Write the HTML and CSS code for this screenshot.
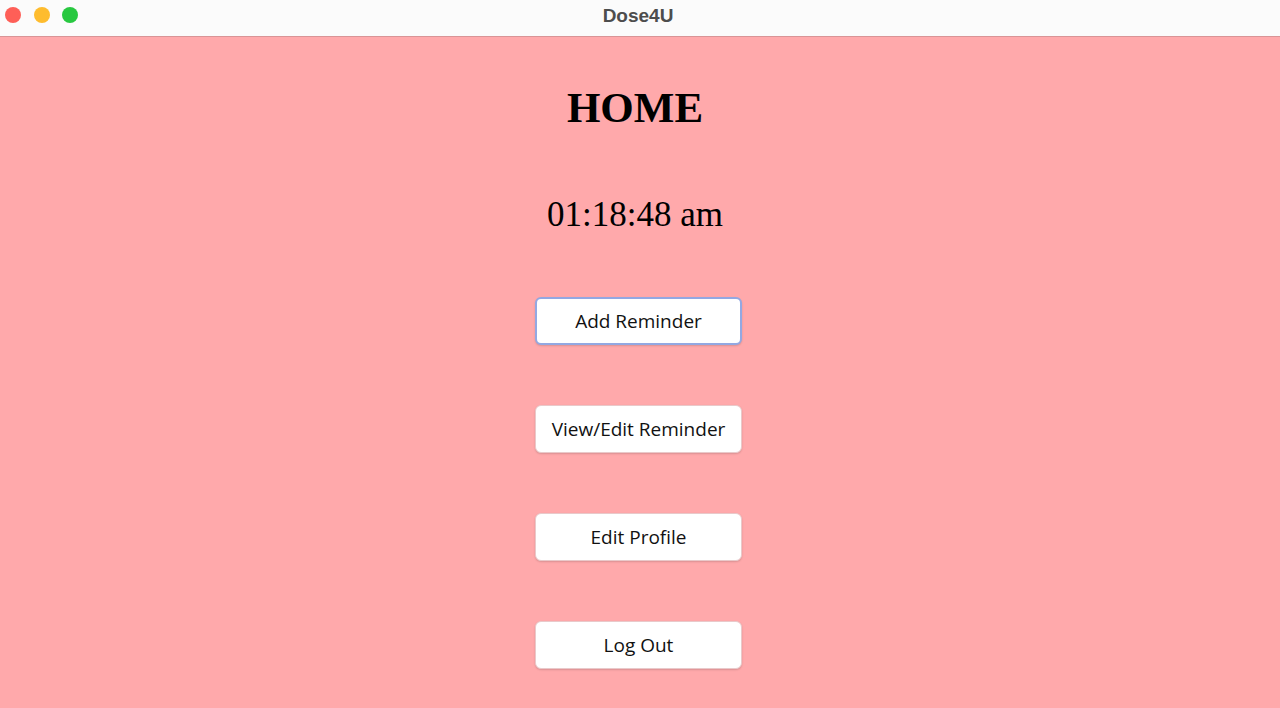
FILE: index.html
```html
<!DOCTYPE html>
<html lang="en">
<head>
    <meta charset="UTF-8">
    <meta name="viewport" content="width=device-width, initial-scale=1.0">
    <title>Dose4U</title>
    <link rel="stylesheet" href="styles.css">
</head>
<body>
    <div class="titlebar">
        <div class="lights">
            <span class="light red"></span>
            <span class="light yellow"></span>
            <span class="light green"></span>
        </div>
        <div class="app-name">Dose4U</div>
    </div>

    <div class="container">
        <h1>HOME</h1>
        <div class="clock" id="clock">01:18:48 am</div>

        <div class="menu">
            <button class="btn focused">Add Reminder</button>
            <button class="btn">View/Edit Reminder</button>
            <button class="btn">Edit Profile</button>
            <button class="btn">Log Out</button>
        </div>
    </div>
</body>
</html>
```

FILE: styles.css
```css
body {
    margin: 0;
    background: #ffa9ab;
    font-family: "Liberation Serif", serif;
    height: 708px;
    overflow: hidden;
}
.titlebar {
    position: relative;
    height: 36px;
    background: #fbfbfb;
    border-bottom: 1px solid #d99496;
    display: flex;
    align-items: center;
    justify-content: center;
}
.lights {
    position: absolute;
    left: 5px;
    top: 7px;
    display: flex;
    gap: 12.5px;
}
.light {
    width: 16px;
    height: 16px;
    border-radius: 50%;
}
.red { background: #fe5f57; }
.yellow { background: #febc2e; }
.green { background: #28c840; }
.app-name {
    font-family: "Liberation Sans", Arial, sans-serif;
    font-weight: bold;
    font-size: 19px;
    color: #4d4d4d;
    margin-left: -4px;
    margin-top: -5px;
}
.container {
    display: flex;
    flex-direction: column;
    align-items: center;
    padding-top: 46px;
    padding-right: 10px;
}
h1 {
    margin: 0;
    font-size: 43px;
    line-height: 50px;
    font-weight: bold;
    color: #000;
}
.clock {
    margin-top: 62px;
    font-size: 35px;
    line-height: 40px;
    color: #000;
}
.menu {
    margin-top: 62px;
    margin-left: 7px;
    display: flex;
    flex-direction: column;
    gap: 60px;
}
.btn {
    width: 207px;
    height: 48px;
    background: #fff;
    border: 1px solid #e9c9ca;
    border-radius: 6px;
    box-shadow: 0 1px 2px rgba(0, 0, 0, 0.15);
    font-family: "Open Sans", sans-serif;
    font-size: 19px;
    color: #111;
    padding: 0;
}
.btn.focused {
    border: 2px solid #93a8e2;
}
```
